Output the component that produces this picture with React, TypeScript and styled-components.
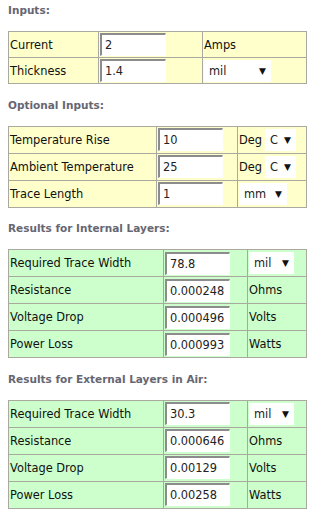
import React from "react";
import styled, { createGlobalStyle } from "styled-components";

type Unit =
  | { kind: "text"; text: string }
  | { kind: "select"; value: string; width: number; prefix?: string };

interface Row {
  label: string;
  value: string;
  unit: Unit;
}

interface Block {
  title: string;
  bg: string;
  rowH: number;
  cols: [number, number, number];
  inputW: number;
  rows: Row[];
}

const txt = (text: string): Unit => ({ kind: "text", text });
const sel = (value: string, width: number, prefix?: string): Unit => ({
  kind: "select",
  value,
  width,
  prefix,
});

const YELLOW = "#ffffcc";
const GREEN = "#ccffcc";

const blocks: Block[] = [
  {
    title: "Inputs:",
    bg: YELLOW,
    rowH: 26,
    cols: [90, 104, 104],
    inputW: 66,
    rows: [
      { label: "Current", value: "2", unit: txt("Amps") },
      { label: "Thickness", value: "1.4", unit: sel("mil", 67) },
    ],
  },
  {
    title: "Optional Inputs:",
    bg: YELLOW,
    rowH: 27,
    cols: [148, 81, 69],
    inputW: 65,
    rows: [
      { label: "Temperature Rise", value: "10", unit: sel("C", 31, "Deg") },
      { label: "Ambient Temperature", value: "25", unit: sel("C", 31, "Deg") },
      { label: "Trace Length", value: "1", unit: sel("mm", 48) },
    ],
  },
  {
    title: "Results for Internal Layers:",
    bg: GREEN,
    rowH: 27,
    cols: [155, 84, 59],
    inputW: 65,
    rows: [
      { label: "Required Trace Width", value: "78.8", unit: sel("mil", 45) },
      { label: "Resistance", value: "0.000248", unit: txt("Ohms") },
      { label: "Voltage Drop", value: "0.000496", unit: txt("Volts") },
      { label: "Power Loss", value: "0.000993", unit: txt("Watts") },
    ],
  },
  {
    title: "Results for External Layers in Air:",
    bg: GREEN,
    rowH: 27,
    cols: [155, 84, 59],
    inputW: 65,
    rows: [
      { label: "Required Trace Width", value: "30.3", unit: sel("mil", 45) },
      { label: "Resistance", value: "0.000646", unit: txt("Ohms") },
      { label: "Voltage Drop", value: "0.00129", unit: txt("Volts") },
      { label: "Power Loss", value: "0.00258", unit: txt("Watts") },
    ],
  },
];

const GlobalStyle = createGlobalStyle`
  html, body {
    margin: 0;
    background: #ffffff;
  }
  body {
    font-family: "DejaVu Sans", Verdana, sans-serif;
    font-size: 11.4px;
    color: #111;
  }
`;

const Page = styled.div`
  width: 322px;
  padding: 3px 0 0 8px;
  box-sizing: border-box;
`;

const Heading = styled.div`
  font-weight: bold;
  font-size: 10.5px;
  line-height: 14px;
  color: #666672;
  margin-bottom: 14px;
`;

const Table = styled.table<{ $bg: string }>`
  width: 298px;
  table-layout: fixed;
  border-collapse: collapse;
  margin-bottom: 13.5px;
  background: ${(p) => p.$bg};
`;

const Col = styled.col<{ $w: number }>`
  width: ${(p) => p.$w}px;
`;

const Tr = styled.tr<{ $h: number }>`
  height: ${(p) => p.$h}px;
`;

const Cell = styled.td`
  border: 1px solid #a9a99f;
  padding: 0 1px;
  vertical-align: middle;
  white-space: nowrap;
  overflow: hidden;
`;

const ValueInput = styled.input<{ $w: number }>`
  display: block;
  width: ${(p) => p.$w}px;
  height: 23px;
  box-sizing: border-box;
  margin: 0;
  padding: 0 3px;
  border-style: solid;
  border-width: 2px 1px 1px 2px;
  border-color: #8c8c8c #ffffff #ffffff #8c8c8c;
  background: #ffffff;
  font-family: "DejaVu Sans", Verdana, sans-serif;
  font-size: 11.4px;
  color: #222;
  outline: none;
`;

const UnitLine = styled.div`
  display: flex;
  align-items: center;
  gap: 3px;
`;

const SelectBox = styled.div<{ $w: number }>`
  position: relative;
  width: ${(p) => p.$w}px;
  height: 22px;
  background: #ffffff;
  &::after {
    content: "▼";
    position: absolute;
    right: 5px;
    top: 50%;
    transform: translateY(-50%);
    font-size: 9px;
    color: #111;
    pointer-events: none;
  }
`;

const Select = styled.select`
  appearance: none;
  width: 100%;
  height: 100%;
  margin: 0;
  padding: 0 0 0 5px;
  border: none;
  background: transparent;
  font-family: "DejaVu Sans", Verdana, sans-serif;
  font-size: 11.4px;
  color: #222;
  outline: none;
`;

const UnitCell = ({ unit }: { unit: Unit }) => {
  if (unit.kind === "text") return <>{unit.text}</>;
  return (
    <UnitLine>
      {unit.prefix && <span>{unit.prefix}</span>}
      <SelectBox $w={unit.width}>
        <Select defaultValue={unit.value}>
          <option value={unit.value}>{unit.value}</option>
        </Select>
      </SelectBox>
    </UnitLine>
  );
};

const Section = ({ block }: { block: Block }) => (
  <section>
    <Heading>{block.title}</Heading>
    <Table $bg={block.bg}>
      <colgroup>
        {block.cols.map((w, i) => (
          <Col key={i} $w={w} />
        ))}
      </colgroup>
      <tbody>
        {block.rows.map((r) => (
          <Tr key={r.label} $h={block.rowH}>
            <Cell>{r.label}</Cell>
            <Cell>
              <ValueInput $w={block.inputW} defaultValue={r.value} />
            </Cell>
            <Cell>
              <UnitCell unit={r.unit} />
            </Cell>
          </Tr>
        ))}
      </tbody>
    </Table>
  </section>
);

export default function App() {
  return (
    <Page>
      <GlobalStyle />
      {blocks.map((b) => (
        <Section key={b.title} block={b} />
      ))}
    </Page>
  );
}
